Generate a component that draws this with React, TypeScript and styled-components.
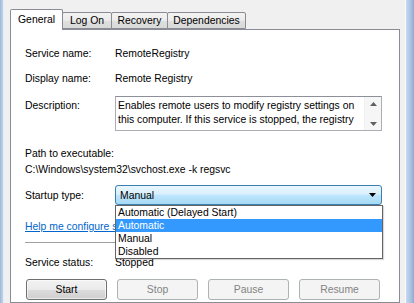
import React from "react";
import styled, { createGlobalStyle } from "styled-components";

const Global = createGlobalStyle`
  html, body { margin: 0; padding: 0; background: #f0f0f0; }
  body {
    font-family: "Liberation Sans", Arial, sans-serif;
    font-size: 10.4px;
    color: #000;
  }
`;

const Frame = styled.div`
  width: 414px;
  height: 303px;
  overflow: hidden;
  display: flex;
  background: #f0f0f0;
`;

const EdgeLeft = styled.div`
  flex: none;
  width: 3px;
  background: linear-gradient(to right, #9fb8d8, #c3d5ea);
  border-right: 1px solid #e4ecf5;
`;

const EdgeRight = styled.div`
  flex: none;
  width: 8px;
  border-left: 1px solid #fbfbfb;
  background: linear-gradient(to right, #c6d8ee, #a9c2e2 60%, #8faad0);
`;

const Dialog = styled.div`
  flex: 1;
  display: flex;
  flex-direction: column;
  padding: 9px 5px 0 6px;
  min-width: 0;
`;

const TabStrip = styled.div`
  display: flex;
  align-items: flex-end;
  height: 20px;
  position: relative;
  z-index: 2;
`;

const Tab = styled.div<{ $w: number; $active?: boolean }>`
  box-sizing: border-box;
  width: ${(p) => p.$w}px;
  height: ${(p) => (p.$active ? 21 : 17)}px;
  margin-bottom: ${(p) => (p.$active ? -1 : 0)}px;
  margin-left: -1px;
  &:first-child { margin-left: 0; }
  border: 1px solid #898c95;
  border-bottom: ${(p) => (p.$active ? "none" : "1px solid #898c95")};
  border-radius: 2px 2px 0 0;
  background: ${(p) =>
    p.$active
      ? "#ffffff"
      : "linear-gradient(to bottom, #f3f3f3 0%, #ebebeb 50%, #dfdfdf 51%, #d9d9d9 100%)"};
  display: flex;
  align-items: ${(p) => (p.$active ? "flex-start" : "center")};
  padding-top: ${(p) => (p.$active ? 2 : 0)}px;
  justify-content: center;
  line-height: 15px;
  position: relative;
  z-index: ${(p) => (p.$active ? 2 : 1)};
`;

const Panel = styled.div`
  flex: 1;
  border: 1px solid #898c95;
  background: #ffffff;
  padding: 16px 0 0 14px;
  display: flex;
  flex-direction: column;
  position: relative;
  z-index: 1;
`;

const Row = styled.div<{ $mt?: number; $align?: string }>`
  display: flex;
  align-items: ${(p) => p.$align || "center"};
  margin-top: ${(p) => p.$mt || 0}px;
  line-height: 15px;
`;

const Label = styled.div<{ $pt?: number }>`
  width: 90px;
  flex: none;
  padding-top: ${(p) => p.$pt || 0}px;
  white-space: nowrap;
`;

const Value = styled.div`
  white-space: nowrap;
`;

const Line = styled.div<{ $mt?: number }>`
  margin-top: ${(p) => p.$mt || 0}px;
  line-height: 15px;
  white-space: nowrap;
`;

const DescBox = styled.div`
  box-sizing: border-box;
  width: 267px;
  height: 35px;
  border: 1px solid #abadb3;
  border-top-color: #8e9099;
  display: flex;
  overflow: hidden;
`;

const DescText = styled.div`
  flex: 1;
  padding: 2px 0 0 2px;
  line-height: 14px;
  overflow: hidden;
  white-space: nowrap;
`;

const ScrollBar = styled.div`
  flex: none;
  width: 17px;
  background: #f6f6f6;
  border-left: 1px solid #f0f0f0;
  display: flex;
  flex-direction: column;
  justify-content: space-between;
  align-items: center;
  padding: 5px 0 4px;
  box-sizing: border-box;
`;

const ComboWrap = styled.div`
  position: relative;
  width: 267px;
`;

const Combo = styled.div`
  box-sizing: border-box;
  height: 20px;
  border: 1px solid #3c7fb1;
  border-radius: 3px;
  background: linear-gradient(to bottom, #eaf6fd 0%, #d9f0fc 45%, #bee6fd 50%, #a7d9f5 100%);
  display: flex;
  align-items: center;
  justify-content: space-between;
  padding: 0 5px 0 4px;
  line-height: 15px;
`;

const DropList = styled.div`
  position: absolute;
  top: 20px;
  left: 0;
  width: 268px;
  box-sizing: border-box;
  border: 1px solid #646464;
  background: #ffffff;
  z-index: 5;
  box-shadow: 1px 1px 1px rgba(0, 0, 0, 0.15);
`;

const Option = styled.div<{ $sel?: boolean }>`
  height: 13px;
  line-height: 13px;
  padding-left: 2px;
  background: ${(p) => (p.$sel ? "#3399ff" : "transparent")};
  color: ${(p) => (p.$sel ? "#ffffff" : "#000000")};
  white-space: nowrap;
`;

const Link = styled.a`
  color: #0066cc;
  text-decoration: underline;
  line-height: 15px;
  white-space: nowrap;
`;

const Separator = styled.div<{ $mt?: number }>`
  margin-top: ${(p) => p.$mt || 0}px;
  width: 357px;
  height: 1px;
  background: #a0a0a0;
`;

const ButtonRow = styled.div`
  display: flex;
  gap: 10px;
  margin: 9px 0 0 1px;
`;

const Button = styled.div<{ $disabled?: boolean }>`
  box-sizing: border-box;
  width: 81px;
  height: 21px;
  border: 1px solid ${(p) => (p.$disabled ? "#adb2b5" : "#707070")};
  border-radius: 3px;
  background: ${(p) =>
    p.$disabled
      ? "#f4f4f4"
      : "linear-gradient(to bottom, #f2f2f2 0%, #ebebeb 50%, #dddddd 51%, #cfcfcf 100%)"};
  color: ${(p) => (p.$disabled ? "#838383" : "#000")};
  display: flex;
  align-items: center;
  justify-content: center;
  line-height: 15px;
  box-shadow: ${(p) => (p.$disabled ? "none" : "inset 0 0 0 1px rgba(255,255,255,0.6)")};
`;

const Arrow = ({ up }: { up?: boolean }) => (
  <svg width="7" height="4" viewBox="0 0 7 4">
    {up ? (
      <path d="M0 4 L3.5 0 L7 4 Z" fill="#606060" />
    ) : (
      <path d="M0 0 L3.5 4 L7 0 Z" fill="#606060" />
    )}
  </svg>
);

const ComboArrow = () => (
  <svg width="7" height="4" viewBox="0 0 7 4">
    <path d="M0 0 L7 0 L3.5 4 Z" fill="#000" />
  </svg>
);

export default function App() {
  return (
    <>
      <Global />
      <Frame>
        <EdgeLeft />
        <Dialog>
          <TabStrip>
            <Tab $w={53} $active>General</Tab>
            <Tab $w={50}>Log On</Tab>
            <Tab $w={57}>Recovery</Tab>
            <Tab $w={79}>Dependencies</Tab>
          </TabStrip>
          <Panel>
            <Row>
              <Label>Service name:</Label>
              <Value>RemoteRegistry</Value>
            </Row>
            <Row $mt={10}>
              <Label>Display name:</Label>
              <Value>Remote Registry</Value>
            </Row>
            <Row $mt={10} $align="flex-start">
              <Label $pt={2}>Description:</Label>
              <DescBox>
                <DescText>
                  Enables remote users to modify registry settings on
                  <br />
                  this computer. If this service is stopped, the registry
                </DescText>
                <ScrollBar>
                  <Arrow up />
                  <Arrow />
                </ScrollBar>
              </DescBox>
            </Row>
            <Line $mt={15}>Path to executable:</Line>
            <Line $mt={1}>C:\Windows\system32\svchost.exe -k regsvc</Line>
            <Row $mt={8}>
              <Label>Startup type:</Label>
              <ComboWrap>
                <Combo>
                  <span>Manual</span>
                  <ComboArrow />
                </Combo>
                <DropList>
                  <Option>Automatic (Delayed Start)</Option>
                  <Option $sel>Automatic</Option>
                  <Option>Manual</Option>
                  <Option>Disabled</Option>
                </DropList>
              </ComboWrap>
            </Row>
            <Line $mt={14}>
              <Link>Help me configure service startup options.</Link>
            </Line>
            <Separator $mt={8} />
            <Row $mt={12}>
              <Label>Service status:</Label>
              <Value>Stopped</Value>
            </Row>
            <ButtonRow>
              <Button>Start</Button>
              <Button $disabled>Stop</Button>
              <Button $disabled>Pause</Button>
              <Button $disabled>Resume</Button>
            </ButtonRow>
          </Panel>
        </Dialog>
        <EdgeRight />
      </Frame>
    </>
  );
}
